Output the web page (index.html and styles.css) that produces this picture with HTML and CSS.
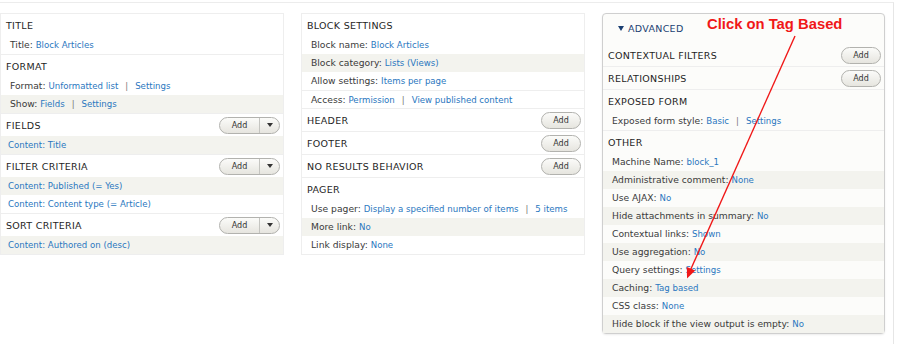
FILE: index.html
```html
<!DOCTYPE html>
<html lang="en">
<head>
    <meta charset="UTF-8">
    <title>Block Articles - Views</title>
    <link rel="stylesheet" href="styles.css">
</head>
<body>
    <div class="frame">
        <div class="columns">
            <!-- first column -->
            <div class="column">
                <div class="sec">
                    <div class="sec-head"><span>Title</span></div>
                    <div class="row">Title: <a href="#">Block Articles</a></div>
                </div>
                <div class="sec">
                    <div class="sec-head"><span>Format</span></div>
                    <div class="row">Format: <a href="#">Unformatted list</a><span class="sep">|</span><a href="#">Settings</a></div>
                    <div class="row alt">Show: <a href="#">Fields</a><span class="sep">|</span><a href="#">Settings</a></div>
                </div>
                <div class="sec">
                    <div class="sec-head">
                        <span>Fields</span>
                        <div class="dropbtn"><span class="drop-main">Add</span><span class="drop-arrow"></span></div>
                    </div>
                    <div class="row alt plain"><a href="#">Content: Title</a></div>
                </div>
                <div class="sec">
                    <div class="sec-head">
                        <span>Filter criteria</span>
                        <div class="dropbtn"><span class="drop-main">Add</span><span class="drop-arrow"></span></div>
                    </div>
                    <div class="row alt plain"><a href="#">Content: Published (= Yes)</a></div>
                    <div class="row plain"><a href="#">Content: Content type (= Article)</a></div>
                </div>
                <div class="sec">
                    <div class="sec-head">
                        <span>Sort criteria</span>
                        <div class="dropbtn"><span class="drop-main">Add</span><span class="drop-arrow"></span></div>
                    </div>
                    <div class="row alt plain"><a href="#">Content: Authored on (desc)</a></div>
                </div>
            </div>

            <!-- second column -->
            <div class="column">
                <div class="sec">
                    <div class="sec-head"><span>Block settings</span></div>
                    <div class="row">Block name: <a href="#">Block Articles</a></div>
                    <div class="row alt">Block category: <a href="#">Lists (Views)</a></div>
                    <div class="row">Allow settings: <a href="#">Items per page</a></div>
                    <div class="row line">Access: <a href="#">Permission</a><span class="sep">|</span><a href="#">View published content</a></div>
                </div>
                <div class="sec">
                    <div class="sec-head"><span>Header</span><button class="btn">Add</button></div>
                </div>
                <div class="sec">
                    <div class="sec-head"><span>Footer</span><button class="btn">Add</button></div>
                </div>
                <div class="sec">
                    <div class="sec-head"><span>No results behavior</span><button class="btn">Add</button></div>
                </div>
                <div class="sec">
                    <div class="sec-head"><span>Pager</span></div>
                    <div class="row">Use pager: <a href="#">Display a specified number of items</a><span class="sep">|</span><a href="#">5 items</a></div>
                    <div class="row alt">More link: <a href="#">No</a></div>
                    <div class="row">Link display: <a href="#">None</a></div>
                </div>
            </div>

            <!-- third column -->
            <div class="column advanced">
                <div class="adv-toggle"><span class="tri"></span>Advanced</div>
                <div class="sec">
                    <div class="sec-head"><span>Contextual filters</span><button class="btn">Add</button></div>
                </div>
                <div class="sec">
                    <div class="sec-head"><span>Relationships</span><button class="btn">Add</button></div>
                </div>
                <div class="sec">
                    <div class="sec-head"><span>Exposed form</span></div>
                    <div class="row">Exposed form style: <a href="#">Basic</a><span class="sep">|</span><a href="#">Settings</a></div>
                </div>
                <div class="sec">
                    <div class="sec-head"><span>Other</span></div>
                    <div class="row">Machine Name: <a href="#">block_1</a></div>
                    <div class="row alt">Administrative comment: <a href="#">None</a></div>
                    <div class="row">Use AJAX: <a href="#">No</a></div>
                    <div class="row alt">Hide attachments in summary: <a href="#">No</a></div>
                    <div class="row">Contextual links: <a href="#">Shown</a></div>
                    <div class="row alt">Use aggregation: <a href="#">No</a></div>
                    <div class="row">Query settings: <a href="#">Settings</a></div>
                    <div class="row alt">Caching: <a href="#">Tag based</a></div>
                    <div class="row">CSS class: <a href="#">None</a></div>
                    <div class="row alt">Hide block if the view output is empty: <a href="#">No</a></div>
                </div>
            </div>
        </div>
    </div>

    <!-- annotation on top of the screenshot -->
    <div class="note">Click on Tag Based</div>
    <svg class="arrow" viewBox="0 0 900 344" width="900" height="344">
        <line x1="795" y1="36" x2="690" y2="271" stroke="#f01818" stroke-width="1.4"/>
        <polygon points="695.2,270.6 686.9,267 687,278.5" fill="#f01818"/>
    </svg>
</body>
</html>
```

FILE: styles.css
```css
body {
    margin: 0;
    position: relative;
    width: 900px;
    height: 344px;
    overflow: hidden;
    background: #ffffff;
    font-family: "DejaVu Sans", Verdana, sans-serif;
    font-size: 8.5px;
    color: #333333;
}

.frame {
    margin-top: 2px;
    width: 894px;
    height: 342px;
    box-sizing: border-box;
    border-top: 1px solid #ececec;
    border-right: 1px solid #e6e6e6;
    padding-top: 10px;
}

.columns {
    display: flex;
    gap: 17px;
    align-items: flex-start;
}

.column {
    width: 284px;
    box-sizing: border-box;
    border: 1px solid #eeeeee;
    background: #ffffff;
}

.advanced {
    width: 283px;
    border: 1px solid #cfcfcf;
    border-radius: 4px;
    background: #fcfcfa;
    box-shadow: 0 1px 2px rgba(0, 0, 0, 0.08);
}

.sec {
    border-bottom: 1px solid #eeeeee;
}

.sec:last-child {
    border-bottom: none;
}

.sec-head {
    display: flex;
    justify-content: space-between;
    align-items: center;
    height: 22px;
    padding: 0 3px 0 5px;
    font-size: 9.5px;
    letter-spacing: 0.3px;
    text-transform: uppercase;
    color: #1e1e1e;
}

.row {
    height: 18px;
    line-height: 18px;
    padding: 0 9px;
    white-space: nowrap;
    font-size: 9.2px;
    color: #3a3a3a;
}

.row.plain {
    padding-left: 7px;
}

.row.alt {
    background: #f3f3ee;
}

.row.line {
    border-top: 1px solid #eeeeee;
    height: 17px;
    line-height: 17px;
}

.row a {
    font-size: 8.6px;
    color: #2a77c0;
    text-decoration: none;
}

.sep {
    margin: 0 7px;
    font-size: 8.5px;
    color: #777777;
}

.btn {
    width: 40px;
    height: 17px;
    padding: 0;
    border: 1px solid #b2b2ae;
    border-radius: 9px;
    background: linear-gradient(#fbfbf9, #e6e5df);
    font-family: "DejaVu Sans", Verdana, sans-serif;
    font-size: 8px;
    color: #333333;
    cursor: pointer;
}

.dropbtn {
    display: flex;
    width: 61px;
    height: 17px;
    box-sizing: border-box;
    border: 1px solid #b2b2ae;
    border-radius: 9px;
    background: linear-gradient(#fbfbf9, #e6e5df);
    font-size: 8px;
    letter-spacing: 0;
    text-transform: none;
    color: #333333;
}

.drop-main {
    width: 39px;
    display: flex;
    align-items: center;
    justify-content: center;
    border-right: 1px solid #c4c4c0;
}

.drop-arrow {
    flex: 1;
    display: flex;
    align-items: center;
    justify-content: center;
}

.drop-arrow::after {
    content: "";
    border-left: 3px solid transparent;
    border-right: 3px solid transparent;
    border-top: 4px solid #333333;
}

.adv-toggle {
    display: flex;
    align-items: center;
    height: 30px;
    padding: 0 0 2px 15px;
    box-sizing: border-box;
    font-size: 9.5px;
    letter-spacing: 0.3px;
    text-transform: uppercase;
    color: #1b3f72;
}

.tri {
    width: 0;
    height: 0;
    margin-right: 4px;
    border-left: 3px solid transparent;
    border-right: 3px solid transparent;
    border-top: 5px solid #1b3f72;
}

.note {
    position: absolute;
    left: 707px;
    top: 16px;
    font-family: "Liberation Sans", Arial, sans-serif;
    font-weight: bold;
    font-size: 14.8px;
    color: #f01818;
}

.arrow {
    position: absolute;
    left: 0;
    top: 0;
    pointer-events: none;
}
```
